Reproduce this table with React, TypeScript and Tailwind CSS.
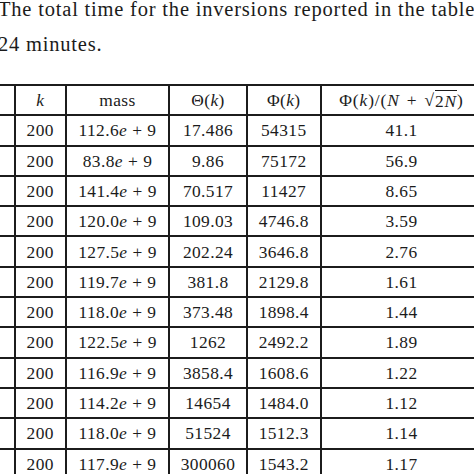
import type { ReactNode } from 'react'

// ─── Data ─────────────────────────────────────────────────────────────────────

const ROWS: [string, string, string, string, string][] = [
  ['200', '112.6', '17.486', '54315',  '41.1'],
  ['200', '83.8',  '9.86',   '75172',  '56.9'],
  ['200', '141.4', '70.517', '11427',  '8.65'],
  ['200', '120.0', '109.03', '4746.8', '3.59'],
  ['200', '127.5', '202.24', '3646.8', '2.76'],
  ['200', '119.7', '381.8',  '2129.8', '1.61'],
  ['200', '118.0', '373.48', '1898.4', '1.44'],
  ['200', '122.5', '1262',   '2492.2', '1.89'],
  ['200', '116.9', '3858.4', '1608.6', '1.22'],
  ['200', '114.2', '14654',  '1484.0', '1.12'],
  ['200', '118.0', '51524',  '1512.3', '1.14'],
  ['200', '117.9', '300060', '1543.2', '1.17'],
]

const COLS = ['w-[15.5px]', 'w-[51.5px]', 'w-[103px]', 'w-[78px]', 'w-[73.5px]', 'w-[162px]']

// ─── Bits ─────────────────────────────────────────────────────────────────────

const I = ({ children }: { children: ReactNode }) => <span className="italic">{children}</span>

function Row({ cells }: { cells: ReactNode[] }) {
  return (
    <div className="flex h-[30.3px] border-b-2 border-[#1c1c1c]">
      {cells.map((c, i) => (
        <div
          key={i}
          className={`${COLS[i]} shrink-0 flex items-center justify-center border-r-2 border-[#1c1c1c] whitespace-nowrap font-[Liberation_Serif,serif]`}
        >
          {c}
        </div>
      ))}
    </div>
  )
}

function Mass({ v }: { v: string }) {
  return (
    <span>
      {v}<I>e</I><span className="mx-[5px]">+</span>9
    </span>
  )
}

// ─── Page ─────────────────────────────────────────────────────────────────────

export default function App() {
  return (
    <div className="w-[474px] h-[474px] overflow-hidden bg-white text-[#1b1b1b]">
      <div className="-mt-[8px] -ml-[2px] text-[20.5px] leading-[35px] tracking-[0.8px] whitespace-nowrap">
        <p className="font-[Liberation_Serif,serif]">The total time for the inversions reported in the table</p>
        <p className="font-[Liberation_Serif,serif]">24 minutes.</p>
      </div>

      <div className="mt-[22px] border-t-2 border-[#1c1c1c] text-[17.4px] tracking-[0.4px] w-[520px]">
        <Row
          cells={[
            '',
            <I>k</I>,
            'mass',
            <span>Θ(<I>k</I>)</span>,
            <span>Φ(<I>k</I>)</span>,
            <span className="flex items-center tracking-[0.9px]">
              Φ(<I>k</I>)/(<I>N</I><span className="mx-[7px]">+</span>
              <span>√</span>
              <span className="border-t border-[#1b1b1b] leading-[18px] pt-[1px]">2<I>N</I></span>)
            </span>,
          ]}
        />
        {ROWS.map((r, i) => (
          <Row key={i} cells={['', r[0], <Mass v={r[1]} />, r[2], r[3], r[4]]} />
        ))}
      </div>
    </div>
  )
}
